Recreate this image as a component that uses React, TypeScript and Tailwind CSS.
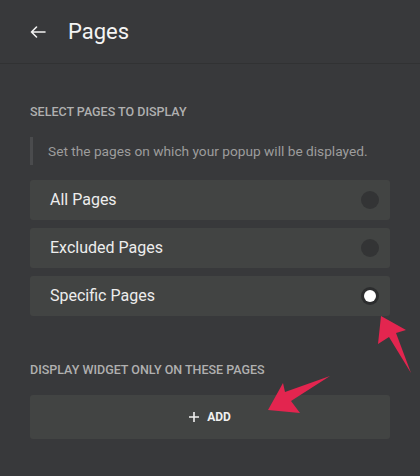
const options = [
    { label: "All Pages", checked: false },
    { label: "Excluded Pages", checked: false },
    { label: "Specific Pages", checked: true },
];

const Radio = ({ checked }: { checked: boolean }) => {
    if (checked) {
        return (
            <div className="w-[18px] h-[18px] rounded-full bg-[#2c2d2e] flex items-center justify-center">
                <div className="w-3 h-3 rounded-full bg-white" />
            </div>
        );
    }
    return <div className="w-[18px] h-[18px] rounded-full bg-[#333435]" />;
};

const App = () => {
    return (
        <div className="relative w-[420px] h-[476px] overflow-hidden bg-[#38393b] text-[#ececec]" style={{ fontFamily: "Roboto, 'Liberation Sans', sans-serif" }}>
            <div className="h-16 flex items-center px-[30px] border-b border-[#313233]">
                <svg width="16" height="12" viewBox="0 0 16 12" fill="none" stroke="#f2f2f2" strokeWidth="1.6" strokeLinecap="round" strokeLinejoin="round">
                    <path d="M15 6H1.5M6.5 1L1.5 6l5 5" />
                </svg>
                <span className="ml-[22px] text-[22px] text-[#f4f4f4]">Pages</span>
            </div>

            <div className="px-[30px] pt-10">
                <div className="text-[12.5px] leading-4 font-medium text-[#b0b0b0]">SELECT PAGES TO DISPLAY</div>
                <div className="mt-[17px] h-7 flex items-center border-l-[3px] border-[#4a4b4d] pl-[15px] text-[13.7px] text-[#9d9d9d]">
                    Set the pages on which your popup will be displayed.
                </div>

                <div className="mt-[15px] flex flex-col gap-2">
                    {options.map((o) => (
                        <div key={o.label} className="h-10 rounded-[3px] bg-[#424443] flex items-center justify-between pl-5 pr-[11px]">
                            <span className="text-[16px] text-[#ededed]">{o.label}</span>
                            <Radio checked={o.checked} />
                        </div>
                    ))}
                </div>

                <div className="mt-[46px] text-[12.5px] leading-4 font-medium text-[#b0b0b0]">DISPLAY WIDGET ONLY ON THESE PAGES</div>
                <button className="mt-[17px] w-full h-11 rounded-[3px] bg-[#424443] flex items-center justify-center gap-2 text-[12px] font-bold text-[#f0f0f0]">
                    <svg width="10" height="10" viewBox="0 0 10 10" stroke="#f0f0f0" strokeWidth="1.6">
                        <path d="M5 0v10M0 5h10" />
                    </svg>
                    ADD
                </button>
            </div>

            {/* pointer arrows drawn over the panel */}
            <svg className="absolute inset-0 pointer-events-none" width="420" height="476" viewBox="0 0 420 476">
                <path d="M381 316L406 330L396 333L411 373L389 337L378 344Z" fill="#e3254f" />
                <path d="M268 410L283 383L285 392L330 376L291 401L300 413Z" fill="#e3254f" />
            </svg>
        </div>
    );
};

export default App;
